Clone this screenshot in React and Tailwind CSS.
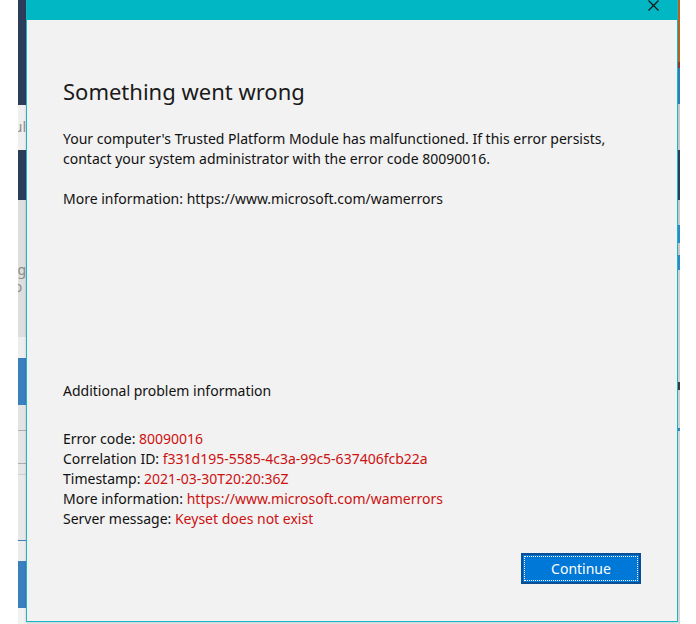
import React from 'react';

const leftStrip = [
  { h: 105, c: 'bg-[#2c3d5b]' },
  { h: 45, c: 'bg-[#efefef]', t: 'ul', ty: 'pt-[13px]' },
  { h: 50, c: 'bg-[#2c3d5b]' },
  { h: 137, c: 'bg-[#dcdfde]', t: 'ng\nto', ty: 'pt-[61px]' },
  { h: 21, c: 'bg-[#eeeeee]' },
  { h: 47, c: 'bg-[#3a7fbf]' },
  { h: 25, c: 'bg-[#e3e3e3]' },
  { h: 1, c: 'bg-[#b0b0b0]' },
  { h: 32, c: 'bg-[#e5e5e5]' },
  { h: 1, c: 'bg-[#adadad]' },
  { h: 10, c: 'bg-[#e6e6e6]' },
  { h: 1, c: 'bg-[#cfcfcf]' },
  { h: 65, c: 'bg-[#e8e8e8]' },
  { h: 1, c: 'bg-[#3a7fbf]' },
  { h: 20, c: 'bg-[#ececec]' },
  { h: 47, c: 'bg-[#3a7fbf]' },
  { h: 16, c: 'bg-[#f2f2f2]' },
];

const rightLine = [
  { h: 62, c: 'bg-[#b5651d]' },
  { h: 6, c: 'bg-[#a03030]' },
  { h: 36, c: 'bg-[#2f7fb0]' },
  { h: 46, c: 'bg-[#c9c9c9]' },
  { h: 50, c: 'bg-[#2c3d5b]' },
  { h: 25, c: 'bg-[#c9c9c9]' },
  { h: 18, c: 'bg-[#2f88c8]' },
  { h: 12, c: 'bg-[#c9c9c9]' },
  { h: 15, c: 'bg-[#2f88c8]' },
  { h: 112, c: 'bg-[#d2d2d2]' },
  { h: 8, c: 'bg-[#3a3a3a]' },
  { h: 38, c: 'bg-[#d2d2d2]' },
  { h: 3, c: 'bg-[#2f88c8]' },
  { h: 193, c: 'bg-[#d6d6d6]' },
];

const details = [
  ['Error code: ', '80090016'],
  ['Correlation ID: ', 'f331d195-5585-4c3a-99c5-637406fcb22a'],
  ['Timestamp: ', '2021-03-30T20:20:36Z'],
  ['More information: ', 'https://www.microsoft.com/wamerrors'],
  ['Server message: ', 'Keyset does not exist'],
];

export default function App() {
  return (
    <div className="w-[696px] h-[624px] flex bg-white overflow-hidden font-['Noto_Sans','Open_Sans',sans-serif]">
      <div className="w-[18px] shrink-0" />

      {/* background window peeking out on the left */}
      <div className="w-[8px] shrink-0 flex flex-col overflow-hidden">
        {leftStrip.map((s, i) => (
          <div
            key={i}
            className={`${s.c} ${s.ty || ''} shrink-0 overflow-hidden flex flex-col items-end text-[14px] leading-[17px] text-[#8a8a8a] whitespace-pre`}
            style={{ height: s.h }}
          >
            {s.t}
          </div>
        ))}
      </div>

      {/* dialog */}
      <div className="w-[652px] h-[622px] shrink-0 flex flex-col bg-[#f2f2f2] border-x border-b border-[#1bb5c7] shadow-[0_2px_2px_rgba(0,0,0,0.18)]">
        <div className="h-[20px] shrink-0 bg-[#00b7c3] relative">
          <svg className="absolute left-[621px] top-0" width="11" height="11" viewBox="0 0 11 11">
            <path d="M0.5 0.5 L10.5 10.5 M10.5 0.5 L0.5 10.5" stroke="#111" strokeWidth="1.1" />
          </svg>
        </div>

        <div className="flex-1 flex flex-col pl-[36px] pr-[20px] text-[14px] leading-[20px] text-[#111]">
          <h1 className="mt-[55px] text-[22px] leading-[32px] font-normal text-[#1a1a1a]">Something went wrong</h1>
          <p className="mt-[22px] whitespace-nowrap">
            Your computer's Trusted Platform Module has malfunctioned. If this error persists,
            <br />
            contact your system administrator with the error code 80090016.
          </p>
          <p className="mt-[20px]">More information: https://www.microsoft.com/wamerrors</p>

          <p className="mt-[172px]">Additional problem information</p>

          <div className="mt-[28px] flex flex-col">
            {details.map(([k, v]) => (
              <div key={k}>
                {k}
                <span className="text-[#cc1111]">{v}</span>
              </div>
            ))}
          </div>

          <div className="mt-[24px] flex justify-end pr-[16px]">
            <button className="w-[120px] h-[31px] border-2 border-[#0a4f93] bg-[#0078d7] p-[1px] text-white">
              <span className="w-full h-full flex items-center justify-center border border-dotted border-white text-[14px] leading-none">
                Continue
              </span>
            </button>
          </div>
        </div>
      </div>

      {/* right edge of another window */}
      <div className="w-[2px] shrink-0 flex flex-col">
        {rightLine.map((s, i) => (
          <div key={i} className={`${s.c} shrink-0`} style={{ height: s.h }} />
        ))}
      </div>
      <div className="flex-1" />
    </div>
  );
}
